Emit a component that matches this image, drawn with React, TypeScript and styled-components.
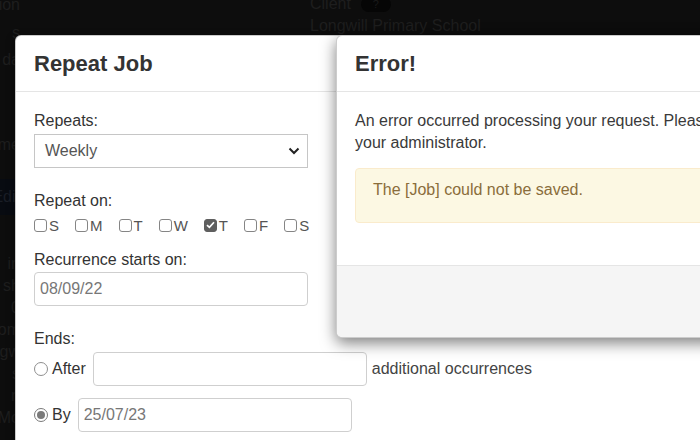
import React from "react";
import styled, { createGlobalStyle } from "styled-components";

const GlobalStyle = createGlobalStyle`
  html, body { margin: 0; padding: 0; }
  body {
    background: #0d0d0d;
    font-family: "Liberation Sans", Arial, sans-serif;
    overflow: hidden;
  }
  * { box-sizing: border-box; }
`;

const Page = styled.div`
  position: relative;
  width: 700px;
  height: 440px;
  overflow: hidden;
  background: #0d0d0d;
`;

/* ---------- dimmed page behind the backdrop ---------- */
const BackPage = styled.div`
  display: flex;
  height: 100%;
  color: #1e1e1e;
  font-size: 16px;
`;

const BackSide = styled.div`
  width: 20px;
  overflow: hidden;
  display: flex;
  flex-direction: column;
  align-items: flex-end;
  white-space: nowrap;
`;

const BackLine = styled.div<{ $mt?: number }>`
  margin-top: ${(p) => p.$mt ?? 0}px;
  height: 22px;
  line-height: 22px;
`;

const BackButton = styled.div<{ $mt?: number }>`
  margin-top: ${(p) => p.$mt ?? 0}px;
  width: 20px;
  height: 36px;
  background: #080b11;
  display: flex;
  align-items: center;
  justify-content: flex-end;
  color: #1a1e26;
`;

const BackMain = styled.div`
  padding-left: 290px;
  margin-top: -7px;
`;

const BackField = styled.div`
  display: flex;
  align-items: center;
  gap: 10px;
  line-height: 22px;
`;

const Pill = styled.span`
  display: inline-block;
  width: 30px;
  height: 15px;
  border-radius: 8px;
  background: #060606;
  font-size: 11px;
  line-height: 15px;
  text-align: center;
  color: #1a1a1a;
`;

/* ---------- modals ---------- */
const Modal = styled.div<{ $left: number; $width: number; $front?: boolean }>`
  position: absolute;
  top: 35px;
  left: ${(p) => p.$left}px;
  width: ${(p) => p.$width}px;
  background: #fff;
  border: 1px solid rgba(0, 0, 0, 0.2);
  border-radius: 6px;
  box-shadow: ${(p) =>
    p.$front ? "0 5px 15px rgba(0,0,0,0.5)" : "0 3px 9px rgba(0,0,0,0.5)"};
  color: #333;
  font-size: 16px;
  overflow: hidden;
`;

const ModalHeader = styled.div`
  height: 56px;
  padding: 0 18px;
  border-bottom: 1px solid #e5e5e5;
  display: flex;
  align-items: center;
`;

const Title = styled.h4`
  margin: 0;
  font-size: 22px;
  font-weight: bold;
  color: #333;
  line-height: 26px;
`;

const ModalBody = styled.div<{ $pb?: number }>`
  padding: 18px 18px ${(p) => p.$pb ?? 18}px;
`;

const Footer = styled.div`
  height: 72px;
  background: #f5f5f5;
  border-top: 1px solid #e5e5e5;
`;

const Message = styled.p`
  margin: 0;
  width: 430px;
  line-height: 22.4px;
  color: #3a3a3a;
`;

const Alert = styled.div`
  margin-top: 13px;
  padding: 10px 17px 21px;
  background: #fcf8e3;
  border: 1px solid #faebcc;
  border-radius: 4px;
  color: #8a6d3b;
  line-height: 22px;
`;

/* ---------- form ---------- */
const Group = styled.div<{ $mt?: number }>`
  margin-top: ${(p) => p.$mt ?? 0}px;
`;

const Label = styled.div<{ $mb?: number }>`
  line-height: 22px;
  margin-bottom: ${(p) => p.$mb ?? 2}px;
  color: #333;
`;

const SelectBox = styled.div`
  width: 274px;
  height: 34px;
  border: 1px solid #c6c6c6;
  display: flex;
  align-items: center;
  justify-content: space-between;
  padding: 0 7px 0 10px;
  color: #555;
`;

const TextInput = styled.div`
  width: 274px;
  height: 34px;
  border: 1px solid #cfcfcf;
  border-radius: 4px;
  display: flex;
  align-items: center;
  padding: 0 5px;
  color: #777;
`;

const DaysRow = styled.div`
  display: flex;
  height: 22px;
  align-items: center;
  font-size: 15px;
`;

const Day = styled.label`
  display: flex;
  align-items: center;
  gap: 2px;
  margin-right: 16px;
  color: #555;
  &:last-child {
    margin-right: 0;
  }
`;

const Box = styled.span<{ $checked?: boolean }>`
  width: 13px;
  height: 13px;
  border-radius: 3px;
  border: 1px solid ${(p) => (p.$checked ? "#5f5f5f" : "#858585")};
  background: ${(p) => (p.$checked ? "#5f5f5f" : "#fff")};
  display: flex;
  align-items: center;
  justify-content: center;
`;

const EndRow = styled.div<{ $mt?: number }>`
  display: flex;
  align-items: center;
  margin-top: ${(p) => p.$mt ?? 0}px;
`;

const RadioLabel = styled.label`
  display: flex;
  align-items: center;
  gap: 4px;
  margin-right: 7px;
  color: #333;
`;

const Radio = styled.span<{ $checked?: boolean }>`
  width: 14px;
  height: 14px;
  border-radius: 50%;
  border: 1px solid ${(p) => (p.$checked ? "#7a7a7a" : "#8f8f8f")};
  background: #fff;
  display: flex;
  align-items: center;
  justify-content: center;
  &::after {
    content: "";
    display: ${(p) => (p.$checked ? "block" : "none")};
    width: 8px;
    height: 8px;
    border-radius: 50%;
    background: #7a7a7a;
  }
`;

const After = styled.span`
  margin-left: 5px;
  color: #444;
`;

const Check = () => (
  <svg width="9" height="8" viewBox="0 0 9 8">
    <path d="M1 4.2 L3.4 6.4 L8 1.3" fill="none" stroke="#fff" strokeWidth="1.7" />
  </svg>
);

const Chevron = () => (
  <svg width="12" height="8" viewBox="0 0 12 8">
    <path d="M1.5 1.5 L6 6 L10.5 1.5" fill="none" stroke="#222" strokeWidth="2" />
  </svg>
);

const days = [
  { l: "S" },
  { l: "M" },
  { l: "T" },
  { l: "W" },
  { l: "T", c: true },
  { l: "F" },
  { l: "S" },
];

export default function App() {
  return (
    <Page>
      <GlobalStyle />
      <BackPage>
        <BackSide>
          <BackLine $mt={-6}>tion</BackLine>
          <BackLine $mt={6}>s</BackLine>
          <BackLine $mt={5}>da</BackLine>
          <BackLine $mt={63}>me</BackLine>
          <BackButton $mt={23}>Edit</BackButton>
          <BackLine $mt={38}>in</BackLine>
          <BackLine>sh</BackLine>
          <BackLine>0</BackLine>
          <BackLine>om</BackLine>
          <BackLine>gw</BackLine>
          <BackLine>s</BackLine>
          <BackLine>n</BackLine>
          <BackLine>Mo</BackLine>
        </BackSide>
        <BackMain>
          <BackField>
            Client <Pill>?</Pill>
          </BackField>
          <BackField>Longwill Primary School</BackField>
        </BackMain>
      </BackPage>

      <Modal $left={15} $width={700}>
        <ModalHeader>
          <Title>Repeat Job</Title>
        </ModalHeader>
        <ModalBody>
          <Group>
            <Label>Repeats:</Label>
            <SelectBox>
              Weekly
              <Chevron />
            </SelectBox>
          </Group>
          <Group $mt={22}>
            <Label $mb={2}>Repeat on:</Label>
            <DaysRow>
              {days.map((d, i) => (
                <Day key={i}>
                  <Box $checked={d.c}>{d.c && <Check />}</Box>
                  {d.l}
                </Day>
              ))}
            </DaysRow>
          </Group>
          <Group $mt={13}>
            <Label $mb={1}>Recurrence starts on:</Label>
            <TextInput>08/09/22</TextInput>
          </Group>
          <Group $mt={22}>
            <Label $mb={2}>Ends:</Label>
            <EndRow>
              <RadioLabel>
                <Radio />
                After
              </RadioLabel>
              <TextInput />
              <After>additional occurrences</After>
            </EndRow>
            <EndRow $mt={12}>
              <RadioLabel>
                <Radio $checked />
                By
              </RadioLabel>
              <TextInput>25/07/23</TextInput>
            </EndRow>
          </Group>
        </ModalBody>
      </Modal>

      <Modal $left={336} $width={480} $front>
        <ModalHeader>
          <Title>Error!</Title>
        </ModalHeader>
        <ModalBody $pb={42}>
          <Message>
            An error occurred processing your request. Please contact your
            administrator.
          </Message>
          <Alert>The [Job] could not be saved.</Alert>
        </ModalBody>
        <Footer />
      </Modal>
    </Page>
  );
}
